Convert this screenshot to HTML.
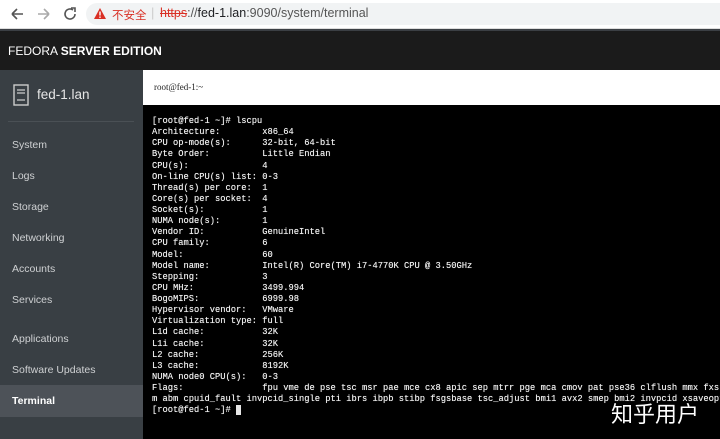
<!DOCTYPE html>
<html><head><meta charset="utf-8"><style>
*{margin:0;padding:0;box-sizing:border-box}
body{width:720px;height:439px;overflow:hidden;background:#000;font-family:"Liberation Sans","Noto Sans CJK SC",sans-serif;position:relative}
.bar{position:absolute;left:0;top:0;width:720px;height:29px;background:#fff;border-bottom:1px solid #ddd}
.url{position:absolute;left:86px;top:3px;width:634px;height:22px;background:#f1f3f4;border-radius:11px 0 0 11px}
.hdr{position:absolute;left:0;top:29px;width:720px;height:41px;background:#1b1b1b;border-top:2px solid #3b3f44}
.hdr span{position:absolute;left:8px;top:13px;color:#fff;font-size:12px}
.side{position:absolute;left:0;top:70px;width:143px;height:369px;background:#393f44}
.side .it{position:absolute;left:12px;color:#cfd1d3;font-size:10.5px}
.term{position:absolute;left:143px;top:70px;width:577px;height:35px;background:#fff}
.tw{position:absolute;left:143px;top:105px;width:577px;height:334px;overflow:hidden}
pre{position:absolute;left:9px;top:11px;font-family:"Liberation Mono",monospace;font-size:8.75px;line-height:11.12px;color:#eeeeee;text-shadow:0 0 0.4px #eee}
</style></head><body>
<div class="bar">
<svg style="position:absolute;left:10px;top:7px" width="80" height="14"><path d="M2 7h11M2 7l5-5M2 7l5 5" stroke="#555" stroke-width="1.6" fill="none"/><path d="M28 7h11M39 7l-5-5M39 7l-5 5" stroke="#aaa" stroke-width="1.6" fill="none"/><path d="M63 3a5 5 0 1 0 2 4" stroke="#555" stroke-width="1.6" fill="none"/><path d="M61 1h4v4" stroke="#555" stroke-width="1.6" fill="none"/></svg>
<div class="url"></div>
<svg style="position:absolute;left:94px;top:8px" width="12" height="11"><path d="M6 0L12 11H0Z" fill="#d93025"/><rect x="5.3" y="3.5" width="1.4" height="4" fill="#fff"/><rect x="5.3" y="8.5" width="1.4" height="1.4" fill="#fff"/></svg>
<span style="position:absolute;left:112px;top:7px;font-size:11.5px;color:#d93025">不安全</span>
<span style="position:absolute;left:151px;top:5px;font-size:13px;color:#ccc">|</span>
<span style="position:absolute;left:160px;top:6px;font-size:12.5px;color:#555"><s style="color:#d93025">https</s>://<span style="color:#202124">fed-1.lan</span>:9090/system/terminal</span>
</div>
<div class="hdr"><span>FEDORA <b>SERVER EDITION</b></span></div>
<div class="side">
<svg style="position:absolute;left:13px;top:14px" width="16" height="22"><rect x="1" y="1" width="14" height="20" fill="none" stroke="#ccc" stroke-width="1.4"/><path d="M4 6h8M4 9h8M4 16h8" stroke="#ccc" stroke-width="1.2"/></svg>
<span style="position:absolute;left:37px;top:17px;color:#e6e6e6;font-size:13.5px">fed-1.lan</span>
<div style="position:absolute;left:8px;top:51px;width:126px;height:1px;background:#4a5055"></div>
<span class="it" style="top:69px">System</span>
<span class="it" style="top:100px">Logs</span>
<span class="it" style="top:131px">Storage</span>
<span class="it" style="top:162px">Networking</span>
<span class="it" style="top:193px">Accounts</span>
<span class="it" style="top:224px">Services</span>
<span class="it" style="top:263px">Applications</span>
<span class="it" style="top:294px">Software Updates</span>
<div style="position:absolute;left:0;top:315px;width:143px;height:32px;background:#4d5258"></div>
<span class="it" style="top:325px;color:#fff;font-weight:bold">Terminal</span>
</div>
<div class="term"><span style="position:absolute;left:11px;top:12px;font-family:'Liberation Serif',serif;font-size:9px;color:#222">root@fed-1:~</span></div>
<div class="tw"><pre>[root@fed-1 ~]# lscpu
Architecture:        x86_64
CPU op-mode(s):      32-bit, 64-bit
Byte Order:          Little Endian
CPU(s):              4
On-line CPU(s) list: 0-3
Thread(s) per core:  1
Core(s) per socket:  4
Socket(s):           1
NUMA node(s):        1
Vendor ID:           GenuineIntel
CPU family:          6
Model:               60
Model name:          Intel(R) Core(TM) i7-4770K CPU @ 3.50GHz
Stepping:            3
CPU MHz:             3499.994
BogoMIPS:            6999.98
Hypervisor vendor:   VMware
Virtualization type: full
L1d cache:           32K
L1i cache:           32K
L2 cache:            256K
L3 cache:            8192K
NUMA node0 CPU(s):   0-3
Flags:               fpu vme de pse tsc msr pae mce cx8 apic sep mtrr pge mca cmov pat pse36 clflush mmx fxsr
m abm cpuid_fault invpcid_single pti ibrs ibpb stibp fsgsbase tsc_adjust bmi1 avx2 smep bmi2 invpcid xsaveopt
[root@fed-1 ~]# <span style="background:#e6e6e6">&nbsp;</span></pre></div>
<span style="position:absolute;left:611px;top:397px;color:#fff;font-size:22px;font-family:'Noto Sans CJK SC',sans-serif">知乎用户</span>
</body></html>
